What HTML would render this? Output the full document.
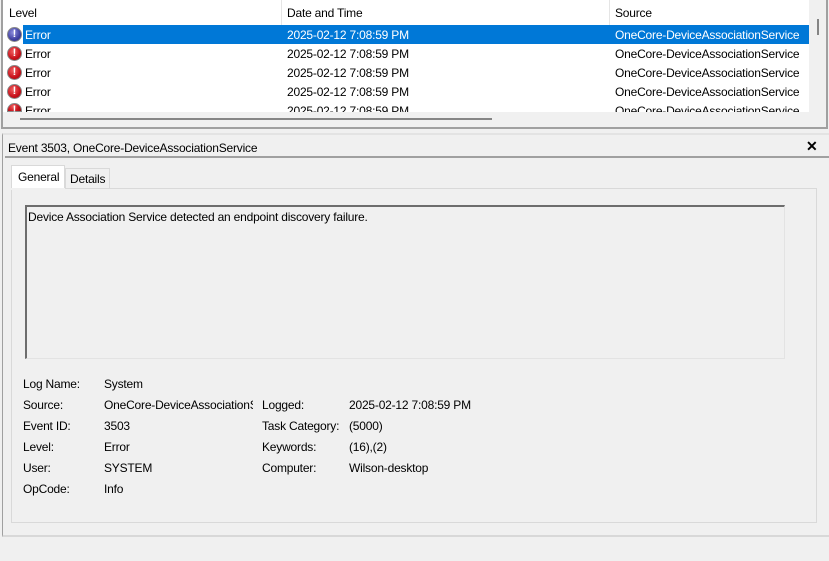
<!DOCTYPE html>
<html><head><style>
*{margin:0;padding:0;box-sizing:border-box}
body{width:829px;height:561px;background:#f0f0f0;font-family:"Liberation Sans",sans-serif;font-size:12px;letter-spacing:-0.2px;color:#000;position:relative;overflow:hidden}
.a{position:absolute;white-space:nowrap}
.ic{position:absolute;left:7px;width:15px;height:15px;border-radius:50%;background:radial-gradient(circle at 40% 35%,#f06060,#c8101a 60%,#901010);border:1px solid #888;color:#fff;font-weight:bold;font-size:11px;text-align:center;line-height:13px;letter-spacing:0}
</style></head><body>
<div class="a" style="left:1px;top:0;width:827px;height:129px;border:2px solid #a0a0a0;border-top:none;background:#fff"></div>
<div class="a" style="left:3px;top:0;width:806px;height:112px;background:#fff"></div>
<div class="a" style="left:281px;top:0;width:1px;height:25px;background:#e5e5e5"></div>
<div class="a" style="left:609px;top:0;width:1px;height:25px;background:#e5e5e5"></div>
<div class="a" style="left:9px;top:6px">Level</div>
<div class="a" style="left:287px;top:6px">Date and Time</div>
<div class="a" style="left:615px;top:6px">Source</div>
<div class="a" style="left:23px;top:25px;width:786px;height:19px;background:#0078d7"></div>
<div class="ic" style="top:27px;background:radial-gradient(circle at 40% 35%,#9090e0,#4040a0 60%,#303080)">!</div>
<div class="ic" style="top:46px">!</div>
<div class="ic" style="top:65px">!</div>
<div class="ic" style="top:84px">!</div>
<div class="ic" style="top:103px;height:9px;border-radius:8px 8px 0 0">!</div>
<div class="a" style="left:25px;top:28px;color:#fff">Error</div>
<div class="a" style="left:287px;top:28px;color:#fff">2025-02-12 7:08:59 PM</div>
<div class="a" style="left:615px;top:28px;color:#fff">OneCore-DeviceAssociationService</div>
<div class="a" style="left:25px;top:47px">Error</div><div class="a" style="left:287px;top:47px">2025-02-12 7:08:59 PM</div><div class="a" style="left:615px;top:47px">OneCore-DeviceAssociationService</div>
<div class="a" style="left:25px;top:66px">Error</div><div class="a" style="left:287px;top:66px">2025-02-12 7:08:59 PM</div><div class="a" style="left:615px;top:66px">OneCore-DeviceAssociationService</div>
<div class="a" style="left:25px;top:85px">Error</div><div class="a" style="left:287px;top:85px">2025-02-12 7:08:59 PM</div><div class="a" style="left:615px;top:85px">OneCore-DeviceAssociationService</div>
<div class="a" style="left:3px;top:100px;width:806px;height:12px;overflow:hidden"><div class="a" style="left:22px;top:4px">Error</div><div class="a" style="left:284px;top:4px">2025-02-12 7:08:59 PM</div><div class="a" style="left:612px;top:4px">OneCore-DeviceAssociationService</div></div>
<div class="a" style="left:3px;top:112px;width:823px;height:15px;background:#f0f0f0"></div>
<div class="a" style="left:20px;top:118px;width:472px;height:2px;background:#858585"></div>
<div class="a" style="left:809px;top:0;width:17px;height:112px;background:#f0f0f0"></div>
<div class="a" style="left:817px;top:19px;width:2px;height:16px;background:#858585"></div>
<div class="a" style="left:2px;top:133px;width:827px;height:404px;border-left:1px solid #a0a0a0;border-top:2px solid #e3e3e3;border-bottom:2px solid #d8d8d8"></div>
<div class="a" style="left:8px;top:141px">Event 3503, OneCore-DeviceAssociationService</div>
<div class="a" style="left:806px;top:138px;font-weight:bold;font-size:14px">✕</div>
<div class="a" style="left:5px;top:156px;width:824px;height:2px;background:#a0a0a0"></div>
<div class="a" style="left:11px;top:165px;width:54px;height:25px;background:#fff;border:1px solid #d9d9d9;border-bottom:none"></div>
<div class="a" style="left:18px;top:170px">General</div>
<div class="a" style="left:65px;top:168px;width:45px;height:21px;border:1px solid #d9d9d9;border-bottom:none"></div>
<div class="a" style="left:70px;top:172px">Details</div>
<div class="a" style="left:11px;top:188px;width:806px;height:335px;border:1px solid #d9d9d9"></div>
<div class="a" style="left:11px;top:188px;width:54px;height:2px;background:#f0f0f0"></div>
<div class="a" style="left:25px;top:205px;width:760px;height:154px;border:1px solid #e3e3e3;border-top:2px solid #6d6d6d;border-left:2px solid #6d6d6d"></div>
<div class="a" style="left:28px;top:210px">Device Association Service detected an endpoint discovery failure.</div>
<div class="a" style="left:23px;top:377px">Log Name:</div><div class="a" style="left:104px;top:377px">System</div>
<div class="a" style="left:23px;top:398px">Source:</div><div class="a" style="left:104px;top:398px;width:149px;overflow:hidden">OneCore-DeviceAssociationService</div>
<div class="a" style="left:262px;top:398px">Logged:</div><div class="a" style="left:349px;top:398px">2025-02-12 7:08:59 PM</div>
<div class="a" style="left:23px;top:419px">Event ID:</div><div class="a" style="left:104px;top:419px">3503</div>
<div class="a" style="left:262px;top:419px">Task Category:</div><div class="a" style="left:349px;top:419px">(5000)</div>
<div class="a" style="left:23px;top:440px">Level:</div><div class="a" style="left:104px;top:440px">Error</div>
<div class="a" style="left:262px;top:440px">Keywords:</div><div class="a" style="left:349px;top:440px">(16),(2)</div>
<div class="a" style="left:23px;top:461px">User:</div><div class="a" style="left:104px;top:461px">SYSTEM</div>
<div class="a" style="left:262px;top:461px">Computer:</div><div class="a" style="left:349px;top:461px">Wilson-desktop</div>
<div class="a" style="left:23px;top:482px">OpCode:</div><div class="a" style="left:104px;top:482px">Info</div>
</body></html>
